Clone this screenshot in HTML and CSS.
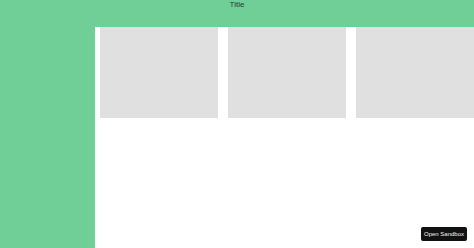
FILE: index.html
```html
<!DOCTYPE html>
<html lang="en">
  <head>
    <title>Title</title>
    <meta charset="UTF-8">
    <link rel="stylesheet" href="styles.css">
  </head>
  <body>
    <header class="top-bar">Title</header>
    <div class="layout">
      <aside class="sidebar"></aside>
      <main class="content">
        <div class="card"></div>
        <div class="card"></div>
        <div class="card"></div>
      </main>
    </div>
    <a class="sandbox-btn" href="#">Open Sandbox</a>
  </body>
</html>
```
FILE: styles.css
```css
html, body {
  height: 100%;
}

body {
  margin: 0;
  padding: 0;
  display: flex;
  flex-direction: column;
  background-color: #ffffff;
  font-family: 'Liberation Sans', Arial, sans-serif;
  overflow: hidden;
}

.top-bar {
  height: 27px;
  flex: 0 0 auto;
  background-color: #6fcf97;
  color: #2a3b30;
  font-size: 8px;
  line-height: 9px;
  text-align: center;
}

.layout {
  flex: 1 1 auto;
  display: flex;
}

.sidebar {
  width: 95px;
  flex: 0 0 auto;
  background-color: #6fcf97;
}

.content {
  flex: 1 1 auto;
  display: grid;
  grid-template-columns: repeat(3, 118px);
  grid-auto-rows: 91px;
  align-content: start;
  gap: 10px;
  padding-left: 5px;
}

.card {
  background-color: #e0e0e0;
}

.sandbox-btn {
  position: fixed;
  right: 7px;
  bottom: 7px;
  padding: 4px 3px;
  background-color: #111111;
  color: #f5f5f5;
  font-size: 6px;
  line-height: 6px;
  border-radius: 2px;
  text-decoration: none;
}
```
